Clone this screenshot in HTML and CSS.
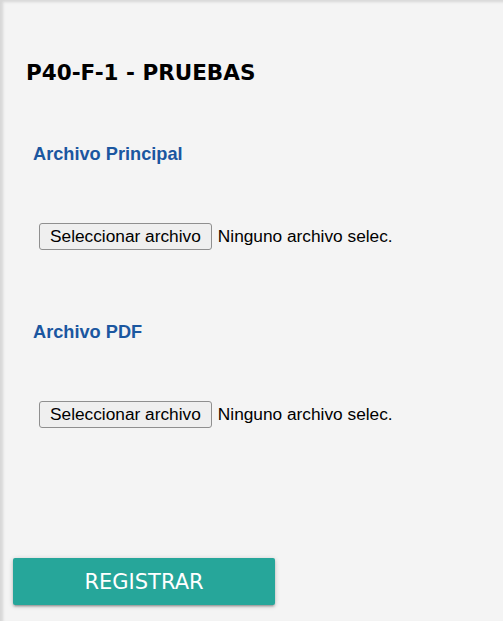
FILE: index.html
```html
<!DOCTYPE html>
<html lang="es">
<head>
<meta charset="utf-8">
<title>P40-F-1 - PRUEBAS</title>
<link rel="stylesheet" href="styles.css">
</head>
<body>
<main class="page">
  <h1 class="title">P40-F-1 - PRUEBAS</h1>

  <section class="field">
    <h2 class="field-label">Archivo Principal</h2>
    <div class="file-row">
      <button type="button" class="file-btn">Seleccionar archivo</button>
      <span class="file-name">Ninguno archivo selec.</span>
    </div>
  </section>

  <section class="field field-second">
    <h2 class="field-label">Archivo PDF</h2>
    <div class="file-row">
      <button type="button" class="file-btn">Seleccionar archivo</button>
      <span class="file-name">Ninguno archivo selec.</span>
    </div>
  </section>

  <button type="button" class="submit-btn">REGISTRAR</button>
</main>
</body>
</html>
```

FILE: styles.css
```css
html, body {
  margin: 0;
  padding: 0;
  background: #f4f4f4;
}

.page {
  box-sizing: border-box;
  height: 621px;
  padding-top: 61px;
  display: flex;
  flex-direction: column;
  align-items: flex-start;
  box-shadow: inset 3px 2px 3px rgba(0, 0, 0, 0.12);
  overflow: hidden;
}

.title {
  margin: 0 0 59px 26px;
  font-family: "DejaVu Sans", Verdana, sans-serif;
  font-weight: bold;
  font-size: 21.5px;
  line-height: 24px;
  color: #000;
}

.field {
  display: flex;
  flex-direction: column;
  align-items: flex-start;
}

.field-second {
  margin-top: 72px;
}

.field-label {
  margin: 0 0 59px 33px;
  font-family: "Liberation Sans", Arial, sans-serif;
  font-weight: bold;
  font-size: 18.2px;
  line-height: 20px;
  color: #1b57a0;
}

.field-second .field-label {
  margin-bottom: 59px;
}

.file-row {
  display: flex;
  align-items: center;
  gap: 6px;
  margin-left: 39px;
  font-family: "Liberation Sans", Arial, sans-serif;
  font-size: 17.3px;
  color: #000;
}

.file-btn {
  box-sizing: border-box;
  height: 27px;
  padding: 0 10px;
  font-family: inherit;
  font-size: inherit;
  color: #000;
  background: #efefef;
  border: 1px solid #8f8f8f;
  border-radius: 3px;
}

.file-name {
  line-height: 27px;
}

.submit-btn {
  margin: 130px 0 0 13px;
  box-sizing: border-box;
  width: 262px;
  height: 47px;
  border: none;
  border-radius: 2px;
  background: #26a69a;
  color: #fff;
  font-family: "DejaVu Sans", Verdana, sans-serif;
  font-size: 21px;
  box-shadow: 0 2px 2px 0 rgba(0, 0, 0, 0.14), 0 3px 1px -2px rgba(0, 0, 0, 0.12), 0 1px 5px 0 rgba(0, 0, 0, 0.2);
}
```
